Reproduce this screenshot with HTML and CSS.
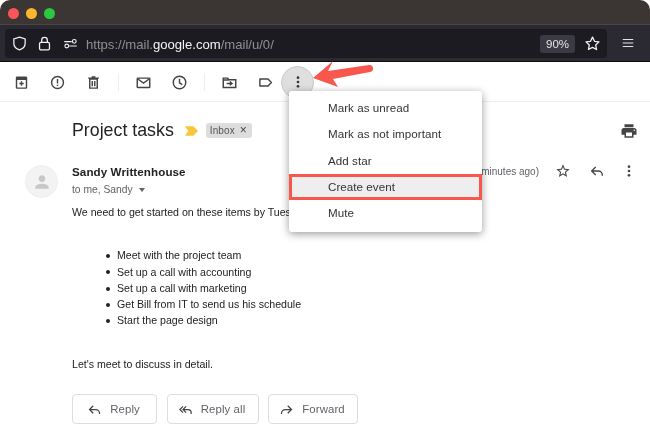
FILE: index.html
```html
<!DOCTYPE html>
<html>
<head>
  <meta charset="utf-8">
  <title>Project tasks - Gmail</title>
  <link rel="stylesheet" href="styles.css">
</head>
<body>
  <svg class="defs" width="0" height="0">
    <symbol id="i-reply" viewBox="0 0 24 24"><path d="M10 6L4 12l6 6M4 12h10a6 6 0 0 1 6 6v1" fill="none" stroke="currentColor" stroke-width="2"/></symbol>
    <symbol id="i-more" viewBox="0 0 24 24"><circle cx="12" cy="5.500" r="2"/><circle cx="12" cy="12" r="2"/><circle cx="12" cy="18.500" r="2"/></symbol>
  </svg>
  <div class="window">
    <div class="titlebar">
      <span class="light red"></span><span class="light yellow"></span><span class="light green"></span>
    </div>
    <div class="navbar">
      <div class="urlbar">
        <svg class="nav-icon" viewBox="0 0 24 24"><path d="M12 3l8 2.500v6c0 5-3.500 8-8 9.500-4.500-1.500-8-4.500-8-9.500v-6z" fill="none" stroke="currentColor" stroke-width="1.800"/></svg>
        <svg class="nav-icon" viewBox="0 0 24 24"><rect x="5" y="10.500" width="14" height="10.500" rx="2" fill="none" stroke="currentColor" stroke-width="1.800"/><path d="M8 10.500V7.500a4 4 0 0 1 8 0v3" fill="none" stroke="currentColor" stroke-width="1.800"/></svg>
        <svg class="nav-icon perm" viewBox="0 0 24 24"><path d="M2 9h12M10 16h12" stroke="currentColor" stroke-width="1.800"/><circle cx="18" cy="8.500" r="3" fill="none" stroke="currentColor" stroke-width="1.800"/><circle cx="6" cy="16" r="3" fill="none" stroke="currentColor" stroke-width="1.800"/></svg>
        <span class="url">https://mail.<b>google.com</b>/mail/u/0/</span>
        <span class="zoom">90%</span>
        <svg class="nav-icon star" viewBox="0 0 24 24"><path d="M12 3l2.800 5.900 6.400.8-4.700 4.400 1.200 6.400-5.700-3.100-5.700 3.100 1.200-6.400-4.700-4.400 6.400-.8z" fill="none" stroke="currentColor" stroke-width="1.800" stroke-linejoin="round"/></svg>
      </div>
      <svg class="nav-icon burger" viewBox="0 0 24 24"><path d="M3 6h18M3 12h18M3 18h18" stroke="currentColor" stroke-width="2"/></svg>
    </div>

    <div class="page">
      <div class="toolbar">
        <span class="tool"><svg viewBox="0 0 24 24"><path d="M5 3.500h14a1 1 0 0 1 1 1V20a1 1 0 0 1-1 1H5a1 1 0 0 1-1-1V4.500a1 1 0 0 1 1-1z" fill="none" stroke="currentColor" stroke-width="2"/><path d="M4 4h16v4H4z"/><path d="M12 10v7M8.500 13.500h7" fill="none" stroke="currentColor" stroke-width="2"/></svg></span>
        <span class="tool"><svg viewBox="0 0 24 24"><circle cx="12" cy="12" r="9.500" fill="none" stroke="currentColor" stroke-width="2"/><path d="M12 6.500v7M12 15.500v2" stroke="currentColor" stroke-width="2"/></svg></span>
        <span class="tool"><svg viewBox="0 0 24 24"><path d="M6 6.500h12V21H6zM3.500 5h17M9 3h6M10 9.500v8.500M14 9.500v8.500" fill="none" stroke="currentColor" stroke-width="2"/></svg></span>
        <span class="divider"></span>
        <span class="tool"><svg viewBox="0 0 24 24"><rect x="2" y="5" width="20" height="15" rx="1" fill="none" stroke="currentColor" stroke-width="2"/><path d="M2.500 6l9.500 7 9.500-7" fill="none" stroke="currentColor" stroke-width="2"/></svg></span>
        <span class="tool"><svg viewBox="0 0 24 24"><circle cx="12" cy="12" r="10" fill="none" stroke="currentColor" stroke-width="2"/><path d="M12 6v6.500l4.500 3" fill="none" stroke="currentColor" stroke-width="2"/></svg></span>
        <span class="divider"></span>
        <span class="tool"><svg viewBox="0 0 24 24"><path d="M2 5h7l2 2.500h11V20H2zM2 8h9M7.500 13.500h8.500M12.500 10.500l3.500 3-3.500 3" fill="none" stroke="currentColor" stroke-width="2"/></svg></span>
        <span class="tool"><svg viewBox="0 0 24 24"><path d="M3 6.500h13l5.500 5.500-5.500 5.500H3z" fill="none" stroke="currentColor" stroke-width="2" stroke-linejoin="round"/></svg></span>
        <span class="tool active"><svg viewBox="0 0 24 24"><use href="#i-more"/></svg></span>
      </div>

      <div class="subject">
        <h1>Project tasks</h1>
        <svg class="marker" viewBox="0 0 14 10"><path d="M0 0h9l5 5-5 5H0l3.500-5z"/></svg>
        <span class="chip">Inbox <span class="chip-x">&times;</span></span>
        <svg class="print" viewBox="0 0 24 24"><path d="M19 8H5c-1.660 0-3 1.340-3 3v6h4v4h12v-4h4v-6c0-1.660-1.340-3-3-3zm-3 11H8v-5h8v5zm3-7c-.55 0-1-.45-1-1s.45-1 1-1 1 .45 1 1-.45 1-1 1zm-1-9H6v4h12V3z"/></svg>
      </div>

      <div class="message">
        <div class="avatar"><svg viewBox="0 0 24 24"><path d="M12 12c2.210 0 4-1.790 4-4s-1.790-4-4-4-4 1.790-4 4 1.790 4 4 4zm0 2c-2.670 0-8 1.340-8 4v2h16v-2c0-2.660-5.330-4-8-4z"/></svg></div>
        <div class="message-main">
          <div class="sender-row">
            <strong class="sender">Sandy Writtenhouse</strong>
            <span class="time">(5 minutes ago)</span>
            <svg class="act" viewBox="0 0 24 24"><path d="M22 9.240l-7.190-.62L12 2 9.190 8.630 2 9.240l5.460 4.730L5.820 21 12 17.270 18.180 21l-1.630-7.030L22 9.240zM12 15.400l-3.760 2.270 1-4.280-3.320-2.880 4.380-.38L12 6.100l1.710 4.040 4.380.38-3.320 2.880 1 4.280L12 15.400z"/></svg>
            <svg class="act" viewBox="0 0 24 24"><use href="#i-reply"/></svg>
            <svg class="act last" viewBox="0 0 24 24"><use href="#i-more"/></svg>
          </div>
          <div class="to">to me, Sandy <span class="caret"></span></div>
          <div class="body">
            <p>We need to get started on these items by Tuesday.</p>
            <ul>
              <li>Meet with the project team</li>
              <li>Set up a call with accounting</li>
              <li>Set up a call with marketing</li>
              <li>Get Bill from IT to send us his schedule</li>
              <li>Start the page design</li>
            </ul>
            <p>Let's meet to discuss in detail.</p>
          </div>
          <div class="actions">
            <span class="btn reply"><svg viewBox="0 0 24 24"><use href="#i-reply"/></svg>Reply</span>
            <span class="btn replyall"><svg viewBox="0 0 24 24"><path d="M8 7l-5 5 5 5M13 7l-5 5 5 5M8 12h8a5 5 0 0 1 5 5v2" fill="none" stroke="currentColor" stroke-width="2"/></svg>Reply all</span>
            <span class="btn forward"><svg viewBox="0 0 24 24"><path d="M14 6l6 6-6 6M20 12H10a6 6 0 0 0-6 6v1" fill="none" stroke="currentColor" stroke-width="2"/></svg>Forward</span>
          </div>
        </div>
      </div>

      <!-- menu opened from the three dots -->
      <div class="menu">
        <div class="menu-item">Mark as unread</div>
        <div class="menu-item">Mark as not important</div>
        <div class="menu-item">Add star</div>
        <div class="menu-item highlighted">Create event</div>
        <div class="menu-item">Mute</div>
      </div>

      <svg class="arrow" width="66" height="34" viewBox="0 0 66 34"><path d="M2 20L22 3l-5 10L58 7a3.500 3.500 0 0 1 1 7L22 21l5 8z"/></svg>
    </div>
  </div>
</body>
</html>
```

FILE: styles.css
```css
* {
  box-sizing: border-box;
}

html, body {
  margin: 0;
  height: 431px;
  overflow: hidden;
  background: #fff;
}

body {
  font-family: "Liberation Sans", Arial, sans-serif;
  color: #222;
}

.defs {
  position: absolute;
}

.window {
  height: 431px;
  border-radius: 10px 10px 0 0;
  overflow: hidden;
  filter: blur(.3px);
}

.titlebar {
  height: 25px;
  background: #3b3534;
  border-bottom: 1px solid #4a4647;
  padding: 8px 0 0 8px;
  display: flex;
  gap: 7px;
}

.light {
  width: 11px;
  height: 11px;
  border-radius: 50%;
}

.red { background: #f9555a; }
.yellow { background: #fdb52c; }
.green { background: #28c840; }

.navbar {
  height: 37px;
  background: #2b2a33;
  border-bottom: 1px solid #0c0c0f;
  padding: 4px 0 0 5px;
  display: flex;
  color: #f2f2f4;
}

.urlbar {
  width: 602px;
  height: 29px;
  background: #1c1b22;
  border-radius: 4px;
  display: flex;
  align-items: center;
  padding: 0 6px 0 6px;
}

.nav-icon {
  width: 17px;
  height: 17px;
  flex: none;
}

.nav-icon + .nav-icon {
  margin-left: 8px;
}

.nav-icon.perm {
  width: 15px;
  height: 15px;
  margin-left: 10px;
}

.url {
  margin: 2px 0 0 8px;
  font-size: 13.100px;
  color: #8f8f94;
  flex: 1;
}

.url b {
  font-weight: 400;
  color: #f4f4f6;
}

.zoom {
  width: 35px;
  height: 18px;
  background: #3a3944;
  border-radius: 3px;
  font-size: 11.500px;
  line-height: 18px;
  text-align: center;
  color: #e4e4e8;
  margin-right: 9px;
}

.nav-icon.star {
  margin: 0;
}

.nav-icon.burger {
  margin: 7px 0 0 14px;
  width: 14px;
  height: 14px;
  color: #e4e4e8;
}

.page {
  position: relative;
  height: 369px;
  background: #fff;
}

.toolbar {
  height: 40px;
  border-bottom: 1px solid #eee;
  padding: 1px 0 0 3px;
  display: flex;
  align-items: center;
  color: #444;
}

.tool {
  width: 36px;
  height: 36px;
  display: flex;
  align-items: center;
  justify-content: center;
  flex: none;
}

.tool svg {
  width: 15px;
  height: 15px;
  fill: currentColor;
}

.tool path,
.tool rect,
.tool circle {
  stroke-width: 2.300px;
}

.divider {
  width: 1px;
  height: 18px;
  margin: 0 6.500px;
  background: #eee;
}

.tool.active {
  width: 33px;
  height: 33px;
  margin-left: -2px;
  border-radius: 50%;
  background: #dfdfdf;
  border: 1px solid #c9c9c9;
}

.tool.active svg {
  width: 16px;
  height: 16px;
  color: #333;
}

.subject {
  display: flex;
  align-items: center;
  height: 29px;
  margin: 14px 0 0 72px;
  padding-right: 12px;
}

h1 {
  margin: 0;
  font-size: 17.800px;
  font-weight: 400;
  color: #222;
}

.marker {
  width: 13px;
  height: 10px;
  margin: 0 8px 0 11px;
  fill: #f8c63d;
}

.chip {
  height: 15px;
  padding: 0 5px 0 4px;
  background: #ddd;
  border-radius: 3px;
  font-size: 10px;
  line-height: 15px;
  color: #555;
  letter-spacing: .1px;
}

.chip-x {
  margin-left: 2px;
  font-size: 12px;
  color: #444;
}

.print {
  width: 18px;
  height: 18px;
  margin-left: auto;
  fill: #444;
}

.message {
  display: flex;
  padding: 12px 0 0 25px;
}

.avatar {
  width: 33px;
  height: 33px;
  margin-top: 8px;
  border-radius: 50%;
  background: #f3f3f3;
  border: 1px solid #eee;
  display: flex;
  align-items: center;
  justify-content: center;
  flex: none;
}

.avatar svg {
  width: 20px;
  height: 20px;
  fill: #c8c8c8;
}

.message-main {
  flex: 1;
  margin: 4px 0 0 14px;
}

.sender-row {
  display: flex;
  align-items: center;
  height: 20px;
  padding-right: 13px;
}

.sender {
  font-size: 11.600px;
  letter-spacing: .1px;
  color: #222;
}

.time {
  margin: 1px 0 0 auto;
  font-size: 10px;
  color: #5f6368;
}

.act {
  width: 16px;
  height: 16px;
  margin-left: 18px;
  fill: #444;
  color: #444;
}

.act.last {
  margin-left: 16px;
}

.time + .act {
  margin-left: 16px;
}

.to {
  margin-top: 2px;
  font-size: 10.300px;
  line-height: 14px;
  color: #5f6368;
}

.caret {
  display: inline-block;
  width: 0;
  height: 0;
  margin: 0 0 1px 3px;
  border: 3px solid transparent;
  border-top: 4px solid #5f6368;
  border-bottom: 0;
}

.body {
  margin-top: 7px;
  font-size: 10.600px;
  line-height: 16.300px;
  color: #222;
}

.body p {
  margin: 0;
}

.body ul {
  margin: 27px 0 27px;
  padding-left: 45px;
  list-style: none;
}

.body li::before {
  content: "";
  display: inline-block;
  width: 4px;
  height: 4px;
  margin: 0 7px 1px -11px;
  border-radius: 50%;
  background: #222;
  vertical-align: middle;
}

.actions {
  display: flex;
  margin-top: 22px;
  gap: 9.500px;
}

.btn {
  height: 30px;
  padding-right: 2px;
  border: 1px solid #ddd;
  border-radius: 4px;
  font-size: 11.400px;
  letter-spacing: .1px;
  color: #5f6368;
  display: flex;
  align-items: center;
  justify-content: center;
  gap: 8px;
}

.btn svg {
  width: 15px;
  height: 15px;
  color: #444;
}

.reply { width: 85px; }
.replyall { width: 92px; }
.forward { width: 90px; }

.menu {
  position: absolute;
  left: 289px;
  top: 29px;
  width: 193px;
  height: 141px;
  padding: 4px 0;
  background: #fff;
  border-radius: 3px;
  box-shadow: 0 2px 8px rgba(0, 0, 0, .4);
}

.menu-item {
  height: 26.300px;
  padding-left: 39px;
  font-size: 11.600px;
  letter-spacing: .05px;
  line-height: 26px;
  color: #333;
}

.menu-item.highlighted {
  background: #eee;
  outline: 3px solid #f8574d;
  outline-offset: -3px;
}

.arrow {
  position: absolute;
  left: 311px;
  top: -4px;
  fill: #f8574d;
}
```
